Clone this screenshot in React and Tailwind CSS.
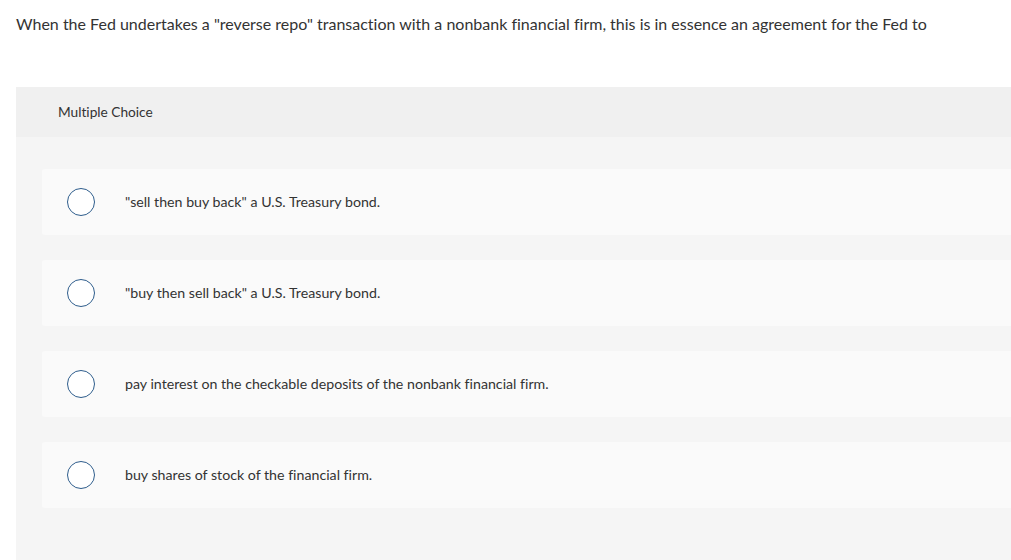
import React from "react";

const options = [
  '"sell then buy back" a U.S. Treasury bond.',
  '"buy then sell back" a U.S. Treasury bond.',
  "pay interest on the checkable deposits of the nonbank financial firm.",
  "buy shares of stock of the financial firm.",
];

export default function App() {
  return (
    <div className="w-[1011px] h-[560px] overflow-hidden bg-white text-[#333333] [font-variant-ligatures:none] font-['Lato','Liberation_Sans',sans-serif]">
      <div className="pl-4 pt-[14px] h-[87px]">
        <p className="text-[16px] leading-[20px]">
          When the Fed undertakes a "reverse repo" transaction with a nonbank financial firm, this is in essence an agreement for the Fed to
        </p>
      </div>
      <div className="ml-4 bg-[#f5f5f5] h-[473px]">
        <div className="h-[50px] bg-[#f0f0f0] flex items-center pl-[42px] text-[13.7px] pt-[1px]">
          Multiple Choice
        </div>
        <div className="pt-8 pl-[26px] flex flex-col gap-[25px]">
          {options.map((o, i) => (
            <div key={i} className="h-[66px] bg-[#fafafa] rounded-l-[3px] flex items-center">
              <div className="ml-[25px] w-[28px] h-[28px] rounded-full border-[1.5px] border-[#2e5d8c] bg-white shrink-0" />
              <span className="ml-[30px] text-[14.2px] text-[#333333]">{o}</span>
            </div>
          ))}
        </div>
      </div>
    </div>
  );
}
